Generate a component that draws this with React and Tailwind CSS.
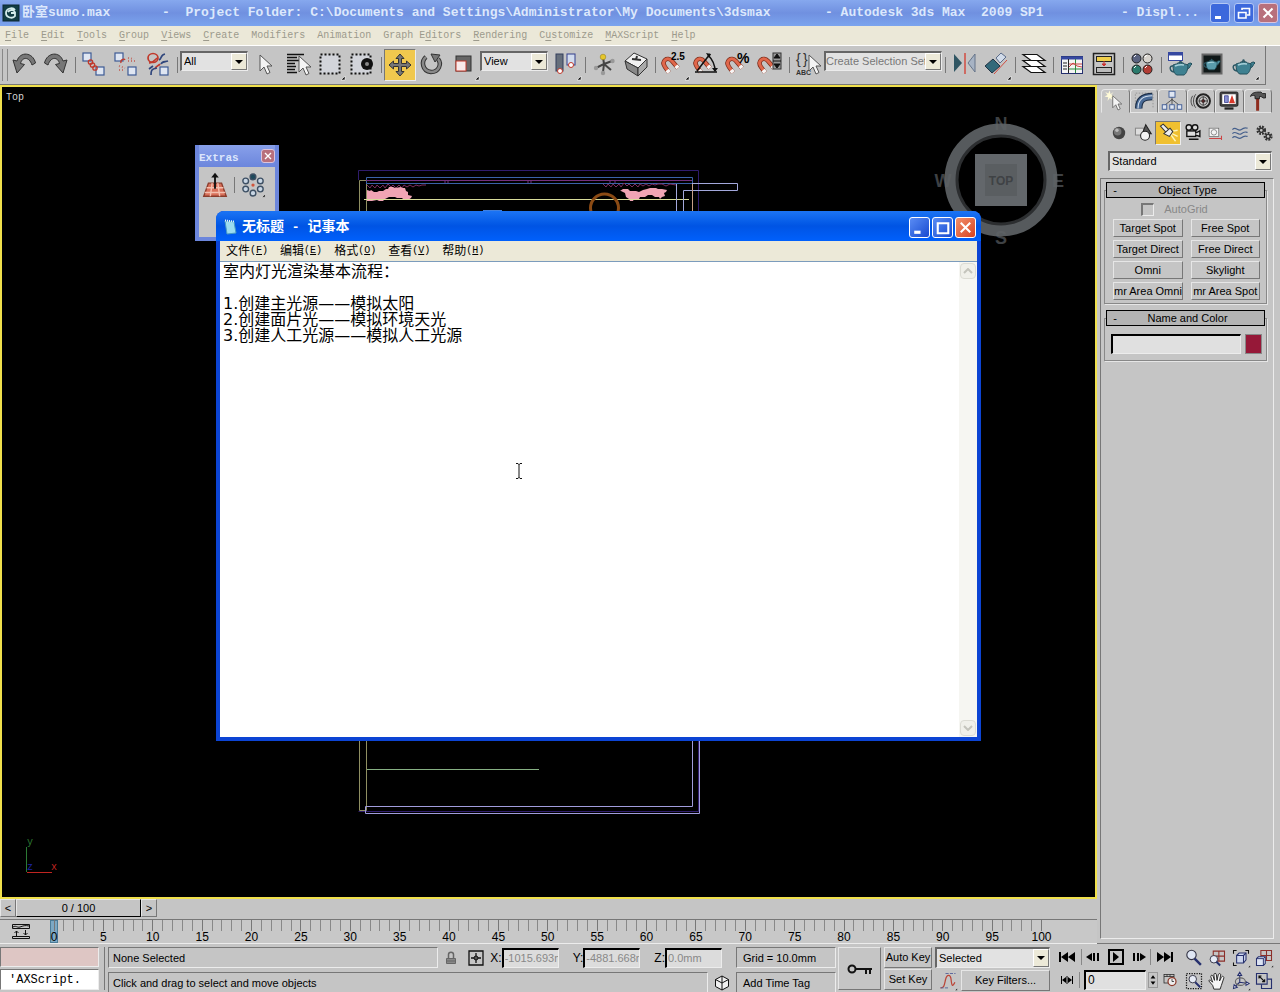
import React, { useState } from "react";

const MENUS = [
  ["", "F", "ile"],
  ["", "E", "dit"],
  ["", "T", "ools"],
  ["", "G", "roup"],
  ["", "V", "iews"],
  ["", "C", "reate"],
  ["Modifiers", "", ""],
  ["Animation", "", ""],
  ["Graph E", "d", "itors"],
  ["", "R", "endering"],
  ["C", "u", "stomize"],
  ["", "M", "AXScript"],
  ["", "H", "elp"],
];

const NOTE_MENUS = [
  ["文件", "F"],
  ["编辑", "E"],
  ["格式", "O"],
  ["查看", "V"],
  ["帮助", "H"],
];

const LIGHT_TYPES = [
  "Target Spot",
  "Free Spot",
  "Target Direct",
  "Free Direct",
  "Omni",
  "Skylight",
  "mr Area Omni",
  "mr Area Spot",
];

const NOTE_TEXT = `室内灯光渲染基本流程：

1.创建主光源——模拟太阳
2.创建面片光——模拟环境天光
3.创建人工光源——模拟人工光源`;

const FRAMES = Array.from({ length: 101 }, (_, i) => i);

const RAISED =
  "border border-t-[#e6e6e6] border-l-[#e6e6e6] border-r-[#777] border-b-[#777]";
const SUNKEN =
  "border border-t-[#777] border-l-[#777] border-r-[#ececec] border-b-[#ececec]";

/* ---------- shared icon parts ---------- */

const Flyout = () => <path d="M31 27v4h-4z" fill="#111" stroke="#fff" strokeWidth=".6" />;

const Pointer = ({ x = 0, y = 0 }) => (
  <path
    transform={`translate(${x} ${y})`}
    d="M0 0v16l4-4 3 7 3-1.500-3-6.500h5z"
    fill="#f4f4f4"
    stroke="#555"
  />
);

const Box = ({ x, y, s = 8 }) => (
  <rect x={x} y={y} width={s} height={s} fill="#dfe6f2" stroke="#3d5a94" strokeWidth="1.200" />
);

const Magnet = () => (
  <g fill="none">
    <path d="M20 19L14 12C9 7 3 12 7 18l4 5.500" stroke="#7a2d1c" strokeWidth="4.500" />
    <path d="M20 19L14 12C9 7 3 12 7 18l4 5.500" stroke="#e0674b" strokeWidth="3" />
    <path d="M18 16.700l2 2.300M9.200 21l1.800 2.500" stroke="#f6f6f6" strokeWidth="4" />
  </g>
);

const Teapot = ({ fill = "#3f8191" }) => (
  <g>
    <path d="M8 16c-4-1-4 6 2 6" fill="none" stroke="#2d5865" strokeWidth="1.500" />
    <path d="M22 19c3 0 3-4 5-5l-1-1c-3 0-4 2-5 3z" fill={fill} stroke="#24505c" />
    <path d="M8 15c5-2 10-2 15 0 0 5-2 9-4 10h-7c-3-1-4-5-4-10z" fill={fill} stroke="#24505c" />
    <path d="M10 16c4-1.500 6-1.500 9-1" fill="none" stroke="#a9d2da" strokeWidth="1.500" />
    <path d="M12 13.500c2-1.500 5-1.500 7 0" stroke="#24505c" fill={fill} />
    <circle cx="15.500" cy="11.500" r="1.200" fill="#2d5865" />
  </g>
);

const Undo = () => (
  <path
    d="M27.500 14C25 3 12 2 9 12L5 11 9 24l7.500-8.500-4-1C14 8 21 7 24 16z"
    fill="#777"
    stroke="#333"
  />
);

const ICONS = {
  undo: <Undo />,
  redo: (
    <g transform="matrix(-1 0 0 1 32 0)">
      <Undo />
    </g>
  ),
  link: (
    <g fill="none" stroke="#c0392b" strokeWidth="1.300">
      <Box x={5} y={4} />
      <Box x={18} y={18} />
      <circle cx="12.500" cy="13" r="2.200" />
      <circle cx="14.500" cy="16" r="2.200" />
      <circle cx="17" cy="19" r="2.200" />
    </g>
  ),
  unlink: (
    <g fill="none" stroke="#c0392b" strokeWidth="1.300">
      <Box x={5} y={4} />
      <Box x={18} y={18} />
      <path d="M11 14c-1-3 3-5 4-3" />
      <path d="M18 9l6 1M18 12h7M9 17l6 2M9 21h6" strokeDasharray="1 2" strokeWidth="2" opacity=".6" />
    </g>
  ),
  bind: (
    <g fill="none" strokeWidth="1.700">
      <ellipse cx="11" cy="9" rx="5" ry="4.500" stroke="#c0392b" />
      <path d="M7 14c4 0 5-2 8-5M18 15c-1 2-4 1-5 5" stroke="#c0392b" />
      <path d="M17 11c3-1 1-5 6-6M9 26c0-4 0-6 6-7M19 15c1-3 4-2 7-3M7 20l4-3" stroke="#30467c" />
      <Box x={18} y={18} />
    </g>
  ),
  select: <Pointer x={10} y={6} />,
  byName: (
    <g>
      <path
        d="M5 5.500h17M5 8.500h10M5 11.500h12M5 14.500h8M5 17.500h9M5 20.500h8M5 23.500h10"
        stroke="#111"
        strokeWidth="1.500"
      />
      <Pointer x={17} y={7} />
    </g>
  ),
  region: (
    <g>
      <rect x="6.500" y="5.500" width="19" height="19" fill="#d2d4da" stroke="#111" strokeWidth="2" strokeDasharray="2 2" />
      <Flyout />
    </g>
  ),
  crossing: (
    <g>
      <rect x="5.500" y="5.500" width="19" height="19" fill="#d2d4da" stroke="#111" strokeWidth="2" strokeDasharray="2 2" />
      <circle cx="21" cy="15" r="6" fill="#111" />
      <circle cx="21" cy="15" r="2" fill="#888" />
    </g>
  ),
  move: (
    <path
      d="M16 5l4 4.500h-2.500v5h5V12l4.500 4-4.500 4v-2.500h-5v5H20L16 27l-4-4.500h2.500v-5h-5V20L5 16l4.500-4v2.500h5v-5H12z"
      fill="#777"
      stroke="#333"
    />
  ),
  rotate: (
    <g fill="none">
      <path d="M10 8c-5 4-4 14 5 15 8 0 11-8 7-13" stroke="#333" strokeWidth="4.500" />
      <path d="M10 8c-5 4-4 14 5 15 8 0 11-8 7-13" stroke="#888" strokeWidth="2.500" />
      <path d="M15 5l9 1-5 7z" fill="#777" stroke="#333" />
    </g>
  ),
  scale: (
    <g>
      <rect x="8" y="7" width="15" height="15" fill="#666" stroke="#333" />
      <rect x="8" y="12" width="10" height="10" fill="#f8eaea" stroke="#c0392b" />
      <Flyout />
    </g>
  ),
  pivot: (
    <g>
      <rect x="6" y="5" width="7" height="17" fill="#666f7c" stroke="#333f5c" />
      <rect x="17" y="5" width="8" height="11" fill="#d2dcee" stroke="#333f8c" />
      <circle cx="10" cy="22" r="2.500" fill="#fff" stroke="#c0392b" />
      <circle cx="21" cy="16" r="2.500" fill="#fff" stroke="#c0392b" />
      <Flyout />
    </g>
  ),
  manipulate: (
    <g>
      <path d="M15 8l1 7-8 4M16 15l8-3M16 15l-1 8M16 15l7 6" fill="none" stroke="#444" strokeWidth="2" />
      <circle cx="15" cy="8" r="2.800" fill="#e6c62a" stroke="#8a7618" strokeWidth=".5" />
      <circle cx="24.500" cy="12" r="2.200" fill="#999" />
      <circle cx="8" cy="19" r="2.200" fill="#999" />
      <circle cx="15" cy="24" r="2.200" fill="#999" />
    </g>
  ),
  keyboard: (
    <g stroke="#333">
      <path d="M5 12l9-8 13 6-9 9z" fill="#f0f0f0" />
      <path d="M5 12l13 7v8L7 20z" fill="#888" />
      <path d="M27 10v8l-9 9v-8z" fill="#aaa" />
      <path d="M12 10l9 1M17 7l-1 4" strokeWidth="2" />
    </g>
  ),
  snap: (
    <g>
      <Magnet />
      <text x="13" y="11" fontSize="10" fontWeight="700" fontFamily="Liberation Sans">2.5</text>
      <Flyout />
    </g>
  ),
  angleSnap: (
    <g>
      <Magnet />
      <path d="M5 23h22M7 22L20 5M18 6c5 5 7 10 7 16" fill="none" stroke="#111" strokeWidth="1.500" />
      <path d="M16 4l5 1-2 4zM22 19l6 0-3 4z" fill="#111" />
    </g>
  ),
  percentSnap: (
    <g>
      <Magnet />
      <text x="15" y="14" fontSize="14" fontWeight="700" fontFamily="Liberation Sans">%</text>
    </g>
  ),
  spinnerSnap: (
    <g>
      <Magnet />
      <rect x="19" y="4" width="8" height="16" fill="#999" stroke="#333" />
      <path d="M23 5l3 4h-6zM23 19l3-4h-6zM19 12h8" fill="#111" stroke="#111" />
    </g>
  ),
  namedSets: (
    <g fill="#333">
      <text x="4" y="15" fontSize="14" fontFamily="Liberation Sans">{"{"}</text>
      <text x="11" y="15" fontSize="14" fontFamily="Liberation Sans">{"}"}</text>
      <text x="4" y="26" fontSize="7" fontWeight="700" fontFamily="Liberation Sans">ABC</text>
      <Pointer x={17} y={6} />
    </g>
  ),
  mirror: (
    <g>
      <path d="M6 5v18l8-9z" fill="#2f5563" />
      <path d="M27 5v18l-7-9z" fill="#a7b3c4" stroke="#66758a" />
      <path d="M17 4v21" stroke="#d04b40" strokeWidth="1.500" />
    </g>
  ),
  align: (
    <g>
      <path d="M5 17l8-7 7 7-8 7z" fill="#32697a" stroke="#234" />
      <path d="M16 9l5-5 5 4-6 6z" fill="#d2dcea" stroke="#5b6c8a" />
      <path d="M14 25L27 11" stroke="#d04b40" />
      <Flyout />
    </g>
  ),
  layers: (
    <g fill="#fff" stroke="#111" strokeWidth="1.200">
      <path d="M5 17.500h14l8 6H13z" />
      <path d="M5 11.500h14l8 6H13z" />
      <path d="M5 5.500h14l8 6H13z" />
    </g>
  ),
  curve: (
    <g fill="none">
      <rect x="5.500" y="7.500" width="21" height="17" fill="#f4f4f4" stroke="#25306e" />
      <path d="M5 9h22" stroke="#3648a0" strokeWidth="3" />
      <path d="M7 14h4M7 17h4M7 20h4M12.500 10v14" stroke="#222" />
      <path d="M13 20h13M19.500 10v14" stroke="#2a8a3c" />
      <path d="M13 18l4-4 4 3 5 1M13 15h13" stroke="#c44" />
    </g>
  ),
  schematic: (
    <g>
      <rect x="5.500" y="4.500" width="21" height="21" fill="none" stroke="#222" strokeWidth="1.500" />
      <rect x="8.500" y="7.500" width="15" height="5" fill="#f0cf4c" stroke="#222" />
      <rect x="8.500" y="18.500" width="15" height="5" fill="#bbb" stroke="#222" />
      <path d="M16 12v4M14 15h4l-2 2z" fill="#c33" stroke="#c33" />
    </g>
  ),
  material: (
    <g stroke="#222">
      <circle cx="10.500" cy="9.500" r="4.500" fill="#5a6380" />
      <circle cx="21.500" cy="9.500" r="4.500" fill="#d8d4ce" />
      <circle cx="10.500" cy="20.500" r="4.500" fill="#2b7a6c" />
      <circle cx="21.500" cy="20.500" r="4.500" fill="#b13c34" />
      <path d="M8 8l2-2M19 8l2-2M8 19l2-2M19 19l2-2" stroke="#fff" />
    </g>
  ),
  renderSetup: (
    <g>
      <g transform="translate(1 1)">
        <Teapot />
      </g>
      <rect x="4.500" y="3.500" width="14" height="8" fill="#fff" stroke="#3648a0" />
      <path d="M4 5h15" stroke="#3648a0" strokeWidth="3" />
    </g>
  ),
  renderFrame: (
    <g>
      <rect x="6.500" y="5.500" width="19" height="19" fill="#101818" stroke="#666" strokeWidth="2" />
      <g transform="translate(4 2) scale(.75)">
        <Teapot fill="#5a9cac" />
      </g>
    </g>
  ),
  render: (
    <g>
      <Teapot />
      <Flyout />
    </g>
  ),
  tabCreate: (
    <g>
      <path d="M9 2l1 5 4-3-3 4 5 2-5 1 2 4-4-3-3 4 1-5-5-1 4-2-3-4 4 2z" fill="#fffbd8" />
      <Pointer x={13} y={9} />
    </g>
  ),
  tabModify: (
    <g fill="none">
      <path d="M4.500 25V5.500H28V25" stroke="#888" strokeDasharray="2 2" />
      <path d="M9 26C9 14 15 10 27 10" stroke="#1d2f48" strokeWidth="10" />
      <path d="M9 26C9 14 15 10 27 10" stroke="#4a6b97" strokeWidth="7" />
      <path d="M8 26C8 13 15 9 27 9" stroke="#d4e0ee" strokeWidth="1.500" />
    </g>
  ),
  tabHierarchy: (
    <g>
      <path d="M16 10v5M16 14L7 21M16 14l9 7M16 14v7" stroke="#333" />
      <Box x={12} y={3} />
      <Box x={3} y={21} s={6} />
      <Box x={13} y={21} s={6} />
      <Box x={23} y={21} s={6} />
    </g>
  ),
  tabMotion: (
    <g fill="none" stroke="#222">
      <circle cx="19" cy="16" r="9" strokeWidth="2.500" />
      <circle cx="19" cy="16" r="5.500" />
      <circle cx="19" cy="16" r="2" fill="#c33" />
      <path d="M19 10v12M13 16h12M9 7c-4 5-4 13 0 18M5 9c-3 4-3 10 0 14" />
    </g>
  ),
  tabDisplay: (
    <g>
      <rect x="4" y="4" width="24" height="19" rx="2" fill="#444" stroke="#111" />
      <rect x="7" y="7" width="18" height="13" fill="#fff" />
      <path d="M10 9h5v9h-5z" fill="#8a90d4" stroke="#333a88" />
      <path d="M20 8l4 11h-8z" fill="#d83a2c" />
      <path d="M10 26h12" stroke="#222" strokeWidth="3" />
    </g>
  ),
  tabUtility: (
    <g>
      <path d="M15.500 11v18" stroke="#8e2c1e" strokeWidth="4" />
      <path d="M6 10c1-5 6-6 12-6h2l2 2h4v6h-3l-3-2h-2v3h-6V9c-3-1-5 0-6 1z" fill="#555" stroke="#111" />
    </g>
  ),
  geometry: (
    <g>
      <circle cx="16" cy="16" r="9" fill="#444" />
      <circle cx="14" cy="14" r="5.500" fill="#777" />
      <circle cx="13" cy="12" r="2.500" fill="#bbb" />
    </g>
  ),
  shapes: (
    <g fill="#ddd" stroke="#222" strokeWidth="1.500">
      <rect x="5" y="9" width="12" height="10" stroke="#888" />
      <path d="M20 4l8 13H15z" fill="#555" />
      <circle cx="19" cy="20" r="6.500" fill="#f4f4f4" />
    </g>
  ),
  lights: (
    <g>
      <path d="M19 14l11-2M19 17l8 11M20 16l10 5" stroke="#fff5b8" strokeWidth="2" />
      <path d="M5 6l4-3 8 8-4 4z" fill="#eee" stroke="#333" strokeWidth="1.500" />
      <path d="M10 17l9-8 4 5-5 7z" fill="#eee" stroke="#333" strokeWidth="1.500" />
    </g>
  ),
  cameras: (
    <g stroke="#111" fill="#ddd" strokeWidth="2">
      <rect x="7" y="13" width="13" height="8" />
      <circle cx="10" cy="8" r="4" />
      <circle cx="19" cy="8" r="4" />
      <path d="M20 16l6-3v8l-6-2M10 25h14" />
    </g>
  ),
  helpers: (
    <g>
      <rect x="6" y="9" width="14" height="12" fill="#f4f4f4" stroke="#666" />
      <circle cx="13" cy="15" r="4" fill="none" stroke="#666" />
      <path d="M6 24h18M24 20v6" stroke="#c44" strokeWidth="1.500" />
    </g>
  ),
  warps: (
    <g fill="none" stroke="#46608c" strokeWidth="1.700">
      <path d="M5 11c5-6 8 4 13 0s6-2 9-2M5 17c5-6 8 4 13 0s6-2 9-2M5 23c5-6 8 4 13 0s6-2 9-2" />
    </g>
  ),
  systems: (
    <g fill="none" stroke="#333">
      <circle cx="12" cy="12" r="5" strokeWidth="4" strokeDasharray="2.500 1.500" />
      <circle cx="22" cy="21" r="4.500" strokeWidth="4" strokeDasharray="2.500 1.500" />
      <circle cx="12" cy="12" r="3" strokeWidth="2" />
      <circle cx="22" cy="21" r="3" strokeWidth="2" />
    </g>
  ),
  zoom: (
    <g>
      <circle cx="12" cy="11" r="7.500" fill="#dfe6f4" stroke="#334" strokeWidth="1.800" />
      <path d="M17 17l10 10" stroke="#26306e" strokeWidth="4" />
    </g>
  ),
  zoomAll: (
    <g fill="none">
      <path d="M10 5h18v16H10zM19 5v16M10 13h18" stroke="#8c2f2a" strokeWidth="1.700" />
      <circle cx="11" cy="18" r="6" fill="#e6ebf6" stroke="#334" strokeWidth="1.500" />
      <path d="M15 22l6 6" stroke="#26306e" strokeWidth="3" />
    </g>
  ),
  extents: (
    <g stroke="#26306e" strokeWidth="1.700">
      <path d="M9 12l4-4h11v11l-4 5H9z" fill="#cdd6ec" />
      <path d="M9 12h11v12M20 12l4-4" fill="none" />
      <path d="M4 9V4h5M23 4h5v5M4 23v5h5" fill="none" stroke="#111" />
      <Flyout />
    </g>
  ),
  extentsAll: (
    <g fill="none">
      <path d="M11 4h17v16H11zM20 4v16M11 12h17" stroke="#8c2f2a" strokeWidth="1.700" />
      <path d="M4 17l3-3h11v11l-3 3H4z" fill="#dbe2f2" stroke="#26306e" strokeWidth="1.700" />
      <path d="M4 17h11v11M15 17l3-3" stroke="#26306e" strokeWidth="1.500" />
      <Flyout />
    </g>
  ),
  zoomRegion: (
    <g fill="none">
      <rect x="4" y="4" width="24" height="24" stroke="#111" strokeWidth="2" strokeDasharray="2 2" />
      <circle cx="14" cy="13" r="6" fill="#e6ebf6" stroke="#334" strokeWidth="1.500" />
      <path d="M18 18l8 8" stroke="#26306e" strokeWidth="3" />
    </g>
  ),
  pan: (
    <path
      d="M11 29l-2-6-6-7c0-3 4-1 6 2L6 9c0-3 3-3 4 0l2 6-1-9c0-3 4-3 4 0l1 9 2-9c1-3 4-2 4 0l-2 10 3-6c2-3 4-1 4 1l-4 12-2 6z"
      fill="#f6f6f6"
      stroke="#222"
      strokeWidth="1.500"
    />
  ),
  orbit: (
    <g fill="none" stroke="#26306e" strokeWidth="1.700">
      <path d="M14 4v14l-9 8M14 18l13 2" />
      <path d="M11 7l3-5 3 5zM5 22l-1 6 6-2zM24 17l5 3-5 3z" fill="#fff" />
      <ellipse cx="15" cy="17" rx="8" ry="6" stroke="#666" />
      <Flyout />
    </g>
  ),
  maximize: (
    <g fill="none" stroke="#26306e" strokeWidth="1.800">
      <path d="M4 4h17v17H4z" />
      <path d="M21 13h7v15H12v-7" />
      <path d="M8 8l9 9M8 12V8h4M17 13v4h-4" stroke="#111" />
    </g>
  ),
  timeConfig: (
    <g fill="none" stroke="#222" strokeWidth="1.500">
      <rect x="4" y="5" width="20" height="17" />
      <path d="M4 9h20M10 5v4M16 5v4" />
      <circle cx="20" cy="19" r="8" fill="#eee" stroke="#8c3a2a" strokeWidth="2.500" />
      <path d="M20 14v5h4" />
    </g>
  ),
  tangent: (
    <g fill="none">
      <path d="M4 27c6 0 6-4 8-13S20 4 21 14s2 12 6 4" stroke="#bb4638" strokeWidth="2" />
      <path d="M12 4h16M4 27h14" stroke="#56639a" strokeWidth="1.500" strokeDasharray="5 2" />
      <Flyout />
    </g>
  ),
  grid: (
    <g>
      <path d="M9 14h14l5 14H4z" fill="#d8705a" stroke="#8a3c2c" strokeWidth="1.500" />
      <path d="M7 19h18M5 24h22M13 14l-2 14M19 14l2 14" stroke="#f3c0b0" strokeWidth="1.500" />
      <path d="M16 20V6" stroke="#111" strokeWidth="2" />
      <path d="M12 8l4-5 4 5z" fill="#111" />
    </g>
  ),
  array: (
    <g fill="#c9d6e4" stroke="#3e5064" strokeWidth="1.700">
      <circle cx="16" cy="6" r="3.500" fill="#1e4a5c" />
      <circle cx="25" cy="11" r="3.500" />
      <circle cx="25" cy="21" r="3.500" />
      <circle cx="16" cy="26" r="3.500" />
      <circle cx="7" cy="21" r="3.500" />
      <circle cx="7" cy="11" r="3.500" />
      <circle cx="16" cy="16" r="2" fill="#d0553c" stroke="none" />
      <Flyout />
    </g>
  ),
};

const Icon = ({ name, className = "size-8" }) => (
  <svg viewBox="0 0 32 32" className={`${className} shrink-0`} aria-hidden="true">
    {ICONS[name]}
  </svg>
);

const Tool = ({ name, active }) => (
  <button
    aria-label={name}
    className={`flex size-8 shrink-0 items-center justify-center ${
      active ? `bg-[#f0c84e] ${SUNKEN}` : ""
    }`}
  >
    <Icon name={name} />
  </button>
);

const Sep = () => (
  <div className="flex w-1.5 shrink-0 justify-center">
    <div className="h-4 w-px bg-[#777]" />
  </div>
);

const Combo = ({ label, value, className, muted }) => (
  <div className={`relative shrink-0 border border-t-2 border-l-2 border-[#ececec] border-t-[#666] border-l-[#666] bg-[#e2e2e2] ${className}`}>
    <select
      aria-label={label}
      className={`block h-full w-full appearance-none bg-transparent text-[11px] outline-none ${
        muted ? "pr-3.5 pl-0 text-[#777]" : "pr-4 pl-0.5 text-black"
      }`}
    >
      <option>{value}</option>
    </select>
    <span className="pointer-events-none absolute inset-y-0 right-0 flex w-4 items-center justify-center border border-t-white border-r-[#777] border-b-[#777] border-l-white bg-[#ece9d8]">
      <svg viewBox="0 0 8 4" className="h-1 w-2">
        <path d="M0 0h8L4 4z" />
      </svg>
    </span>
  </div>
);

const WindowButton = ({ kind, faded, className }) => {
  const tone =
    kind === "close"
      ? faded
        ? "bg-[#b8707c] border-[#dcc4dc]"
        : "bg-linear-to-br from-[#f0906c] to-[#d8401c] border-white"
      : faded
        ? "bg-[#3c68dc] border-[#b4c8f4]"
        : "bg-linear-to-br from-[#5a8cf4] to-[#1848d0] border-white";
  return (
    <button aria-label={kind} className={`rounded-[3px] border ${tone} ${className}`}>
      <svg viewBox="0 0 18 18" className="size-full" fill="none" stroke="#fff" strokeWidth="2">
        {kind === "minimize" && <path d="M4 13.500h6" strokeWidth="3" />}
        {kind === "maximize" && <path d="M4 5h11M4.500 4v10.500h10V4" />}
        {kind === "restore" && <path d="M7 6V4.500h7.500V11H12M3.500 8.500H11V14H3.500z" strokeWidth="1.600" />}
        {kind === "close" && <path d="M4.500 4.500l9 9M13.500 4.500l-9 9" />}
      </svg>
    </button>
  );
};

/* ---------- top bars ---------- */

function TitleBar() {
  return (
    <header className="flex h-[26px] items-center overflow-hidden bg-linear-to-b from-[#86a8ee] via-[#7090e0] to-[#7ba4ee] pr-0.5 pl-0.5">
      <svg viewBox="0 0 18 18" className="size-[18px] shrink-0">
        <rect width="16" height="16" x="1" y="1" fill="#123c44" stroke="#0a2630" />
        <path d="M13 6C11 3 4 4 4 9s7 6 9 3V9H9M6 8c1-2 5-3 7 0" fill="none" stroke="#d5ecec" strokeWidth="1.800" />
      </svg>
      <h1 className="flex min-w-0 flex-1 overflow-hidden pl-0.5 font-['Liberation_Mono','Noto_Sans_CJK_SC',monospace] text-[13px] font-bold whitespace-pre text-[#dce8fc]">
        <span className="w-[140px] shrink-0">卧室sumo.max</span>
        <span className="w-[663px] shrink-0">-  Project Folder: C:\Documents and Settings\Administrator\My Documents\3dsmax</span>
        <span className="w-[296px] shrink-0">- Autodesk 3ds Max  2009 SP1</span>
        <span>- Displ...</span>
      </h1>
      <div className="flex gap-1">
        <WindowButton kind="minimize" faded className="size-5" />
        <WindowButton kind="restore" faded className="size-5" />
        <WindowButton kind="close" faded className="size-5" />
      </div>
    </header>
  );
}

function MenuBar() {
  return (
    <nav className="flex h-5 items-center gap-3 border-b border-white bg-[#ebe8d8] pl-[5px] font-['Liberation_Mono',monospace] text-[10px] text-[#9c9a8c]">
      {MENUS.map(([before, key, after]) => (
        <button key={before + key + after} className="whitespace-nowrap">
          {before}
          <span className="underline underline-offset-2">{key}</span>
          {after}
        </button>
      ))}
    </nav>
  );
}

function Toolbar() {
  return (
    <div className="flex h-[39px] bg-[#c5c5c5]">
      <div className="flex w-[1266px] items-center overflow-hidden border-r border-b border-[#777] pl-0.5">
        <div className="h-8 w-1.5 shrink-0 border-x border-[#888]" />
        <Tool name="undo" />
        <Tool name="redo" />
        <Sep />
        <Tool name="link" />
        <Tool name="unlink" />
        <Tool name="bind" />
        <Sep />
        <Combo label="Selection filter" value="All" className="mb-2 h-5 w-[68px]" />
        <div className="w-0.5 shrink-0" />
        <Tool name="select" />
        <Tool name="byName" />
        <Tool name="region" />
        <Tool name="crossing" />
        <Sep />
        <Tool name="move" active />
        <Tool name="rotate" />
        <Tool name="scale" />
        <Combo label="Reference coordinate system" value="View" className="mb-2 h-5 w-[68px]" />
        <div className="w-0.5 shrink-0" />
        <Tool name="pivot" />
        <Sep />
        <Tool name="manipulate" />
        <Tool name="keyboard" />
        <Sep />
        <Tool name="snap" />
        <Tool name="angleSnap" />
        <Tool name="percentSnap" />
        <Tool name="spinnerSnap" />
        <Sep />
        <Tool name="namedSets" />
        <Combo label="Named selection sets" value="Create Selection Set" muted className="mb-2 h-5 w-[118px]" />
        <Sep />
        <Tool name="mirror" />
        <Tool name="align" />
        <Sep />
        <Tool name="layers" />
        <Sep />
        <Tool name="curve" />
        <Tool name="schematic" />
        <Sep />
        <Tool name="material" />
        <Sep />
        <Tool name="renderSetup" />
        <Tool name="renderFrame" />
        <Tool name="render" />
      </div>
    </div>
  );
}

/* ---------- viewport ---------- */

const ZIGZAG = "l3 3 2-3 3 3 2-3 3 3 3-3 2 3 3-4 3 3 2-2 3 3 3-3 3 3 2-3 3 2 3-2 3 2 3-2 3 1 3-1 4 0";

function Scene() {
  return (
    <svg viewBox="2 87 800 740" className="absolute top-0 left-0 h-[740px] w-[800px]" fill="none">
      <path d="M358.500 180V170.500h340v641h-340" stroke="#2f1c6c" />
      <path d="M366.500 212V177.500h326V184M366 183.500h326" stroke="#3a62a8" />
      <path d="M366 180.500h326M445 181v2M448 181v2M528 181v2M531 181v2M610 181v2M615 181v2" stroke="#74307e" />
      <path d="M366 180.500h-6.500v630h7V184" stroke="#8f8f62" />
      <path d={`M367 185${ZIGZAG}`} stroke="#7c2c5c" />
      <path d={`M603 184${ZIGZAG}l4 2 4-2 6 1`} stroke="#7c2c5c" />
      <path
        d="M367 190l3 1 1-1 3 2 3 0 2-1 4 0 3-2 2 0 1-2 4 0 2 1 6-1 1 1h3l1 3 2 1 0 3 4 1-1 2-3 2h-4l-2-2-5 0-2-1-6 0-4 2-2 2-4 0-2-1-5 1h-5z"
        fill="#f0a4b4"
      />
      <path
        d="M620 191l3-2 5 0 2 2 6 0 3 1 4-2 4-1 3-1h6l2 1h4l5 1-1 2-2 1 1 3-3 1-2 2-1-2-4 0-3-2-4 0-3 2-5 0-1 2-5 0-1 2h-3l-1-2-3-2-1-4-4-2z"
        fill="#f0a4b4"
      />
      <path d="M364 199.500h325" stroke="#d8dc9a" />
      <path d="M676.500 184v28M692 183.500h45.500v7h-54V212" stroke="#a3a8dc" />
      <path d="M692.500 184v28" stroke="#c8a088" />
      <circle cx="604.500" cy="208" r="14" stroke="#8a4a14" strokeWidth="3" />
      <path d="M483 210.500h19" stroke="#4080e0" />
      <path d="M367 769.500h172" stroke="#86b083" />
      <path d="M692.500 740v66.500h-327v7h334V740" stroke="#a09cdc" />
    </svg>
  );
}

function Compass() {
  return (
    <svg viewBox="930 110 140 140" className="absolute top-[23px] right-[25px] size-[140px]" fontFamily="Liberation Sans">
      <g fill="#3e4144" fontSize="18" fontWeight="700" textAnchor="middle">
        <text x="1001" y="130">N</text>
        <text x="1001" y="244">S</text>
        <text x="943" y="187">W</text>
        <text x="1058" y="187">E</text>
      </g>
      <circle cx="1001" cy="180" r="50" fill="none" stroke="#5f6467" strokeWidth="13" opacity=".9" />
      <circle cx="1001" cy="180" r="44" fill="none" stroke="#2c2e30" strokeWidth="3" />
      <rect x="975" y="154" width="52" height="52" fill="#63676b" />
      <rect x="985" y="164" width="32" height="32" fill="#5a5e61" />
      <text x="1001" y="185" fill="#3f4245" fontSize="12" fontWeight="700" textAnchor="middle">
        TOP
      </text>
    </svg>
  );
}

function ExtrasWindow() {
  return (
    <section className="absolute top-[58px] left-[193px] flex h-24 w-[84px] flex-col border-4 border-t-0 border-[#6c86dc] bg-[#c5c5c5]">
      <div className="flex h-[22px] items-center justify-between bg-linear-to-b from-[#88a0ea] to-[#6c86dc]">
        <h2 className="pt-1 font-['Liberation_Mono',monospace] text-[11px] font-bold text-[#dce6fc]">Extras</h2>
        <WindowButton kind="close" faded className="size-3.5" />
      </div>
      <div className="flex items-center pt-0.5">
        <button aria-label="grid" className="flex size-8 items-center justify-center">
          <Icon name="grid" className="size-[30px]" />
        </button>
        <Sep />
        <button aria-label="array" className="flex size-8 items-center justify-center">
          <Icon name="array" className="size-[26px]" />
        </button>
      </div>
    </section>
  );
}

function ScrollArrow({ up }) {
  return (
    <button aria-label={up ? "Scroll up" : "Scroll down"} className="m-px flex h-4 items-center justify-center rounded-sm border border-[#dcdcd4] bg-[#f0f0ea]">
      <svg viewBox="0 0 10 6" className="h-1.5 w-2.5" fill="none" stroke="#c4c4bc" strokeWidth="2">
        <path d={up ? "M1 5l4-4 4 4" : "M1 1l4 4 4-4"} />
      </svg>
    </button>
  );
}

function Notepad() {
  const [text, setText] = useState(NOTE_TEXT);

  return (
    <section className="absolute top-[124px] left-[214px] flex h-[530px] w-[765px] flex-col rounded-t-lg border-4 border-t-0 border-[#0c44d4] bg-[#0c44d4] font-['Liberation_Sans','Noto_Sans_CJK_SC',sans-serif]">
      <div className="-mx-1 flex h-[30px] shrink-0 items-center rounded-t-lg bg-linear-to-b from-[#1c74f4] via-[#0054e4] to-[#0060fc] pt-0.5 pr-[5px] pl-1.5">
        <svg viewBox="0 0 16 16" className="size-4">
          <path d="M3 2l9 1 2 11-9 1z" fill="#9cdcf0" stroke="#4a9cc4" />
          <path d="M3 1.500l9 1" stroke="#e8f8ff" strokeWidth="2" strokeDasharray="1 1" />
        </svg>
        <h2 className="flex-1 pl-1 text-sm font-bold whitespace-pre text-white">
          无标题<span className="font-['Liberation_Mono',monospace] text-[13px]"> - </span>记事本
        </h2>
        <div className="flex gap-0.5">
          <WindowButton kind="minimize" className="size-[21px]" />
          <WindowButton kind="maximize" className="size-[21px]" />
          <WindowButton kind="close" className="size-[21px]" />
        </div>
      </div>
      <nav className="flex h-5 shrink-0 items-center gap-3 bg-[#ece9d8] pl-1.5">
        {NOTE_MENUS.map(([name, key]) => (
          <button key={key} className="flex items-center text-xs leading-5">
            {name}
            <span className="font-['Liberation_Mono',monospace] text-[10px]">
              (<span className="underline">{key}</span>)
            </span>
          </button>
        ))}
      </nav>
      <div className="flex min-h-0 flex-1 border-t border-[#7c9cbc] bg-white">
        <textarea
          aria-label="记事本"
          value={text}
          onChange={(e) => setText(e.target.value)}
          className="block flex-1 resize-none overflow-hidden bg-white pt-0.5 pl-[3px] font-['DejaVu_Sans','Noto_Sans_CJK_SC',sans-serif] text-base leading-4 text-black outline-none"
        />
        <div className="flex w-[18px] flex-col justify-between bg-[#f6f6f2]">
          <ScrollArrow up />
          <ScrollArrow />
        </div>
      </div>
    </section>
  );
}

function Viewport() {
  return (
    <main className="relative min-h-[760px] flex-1 overflow-hidden border-2 border-[#f0e04c] bg-black">
      <p className="pt-[3px] pl-1 font-['Liberation_Mono',monospace] text-[10px] text-[#d4d4d4]">Top</p>
      <Scene />
      <Compass />
      <svg viewBox="20 835 40 42" className="absolute bottom-5 left-[18px] h-[42px] w-10" fontFamily="Liberation Mono" fontSize="10">
        <path d="M26.500 847v25" stroke="#2c7a34" />
        <path d="M27 872.500h25" stroke="#c02420" />
        <text x="27" y="845" fill="#2c7a34">y</text>
        <text x="27" y="870" fill="#1c24a4">z</text>
        <text x="51" y="870" fill="#c02420">x</text>
      </svg>
      <ExtrasWindow />
      <Notepad />
      <svg viewBox="0 0 8 16" className="absolute top-[376px] left-[513px] h-4 w-2" fill="none" stroke="#111">
        <path d="M1 .500h2l1 1 1-1h2M4 1v14M1 15.500h2l1-1 1 1h2" />
      </svg>
    </main>
  );
}

/* ---------- time slider and track bar ---------- */

function TimeSlider() {
  return (
    <div className="flex h-5 text-[11px] leading-4">
      <button aria-label="Previous frame" className={`w-4 ${RAISED} mb-0.5`}>&lt;</button>
      <button className="mb-0.5 w-[125px] border border-t-[#e6e6e6] border-r-black border-b-black border-l-[#e6e6e6]">
        0 / 100
      </button>
      <button aria-label="Next frame" className={`w-4 ${RAISED} mb-0.5`}>&gt;</button>
    </div>
  );
}

function TrackBar() {
  return (
    <div className="flex h-[25px] border-t border-b border-t-[#777] border-b-[#ececec] bg-[#c8c8c8] pr-[54px]">
      <button aria-label="Open mini curve editor" className="w-[54px] shrink-0 pl-3">
        <svg viewBox="0 0 18 16" className="h-4 w-[18px]" fill="none" stroke="#111">
          <path d="M.500.500h17v4H.500zM.500 12.500h17v2H.500zM1 3c3-2 4 1 7 0s5-2 9-1" />
          <path d="M4.500 12V7M2.500 9l2-2 2 2M13.500 6v5M11.500 9l2 2 2-2" />
        </svg>
      </button>
      <div className="relative flex flex-1 justify-between text-[12px] leading-3">
        <div className="absolute inset-y-0 -left-1 w-2 border border-[#4c7c98] bg-[#7ca8c4]" />
        {FRAMES.map((f) =>
          f % 5 === 0 ? (
            <div key={f} className="relative flex w-0 flex-col items-center">
              <div className="h-3 w-px bg-[#777]" />
              <span>{f}</span>
            </div>
          ) : (
            <div key={f} className="flex w-0 flex-col items-center">
              <div className="h-[11px] w-px bg-[#888]" />
            </div>
          ),
        )}
      </div>
    </div>
  );
}

/* ---------- command panel ---------- */

const Rollout = ({ title, children }) => (
  <section className="flex flex-col">
    <button className="relative z-10 mx-0.5 flex h-4 items-center border border-black bg-[#b4b4b4] text-[11px] leading-3">
      <span className="w-4">-</span>
      <span className="flex-1 pr-5 pl-2 text-center">{title}</span>
    </button>
    <div className="-mt-2 border border-[#888] pt-2 pr-1.5 pl-2 shadow-[1px_1px_0_#e6e6e6]">{children}</div>
  </section>
);

function CommandPanel() {
  const tabs = ["tabCreate", "tabModify", "tabHierarchy", "tabMotion", "tabDisplay", "tabUtility"];
  const kinds = ["geometry", "shapes", "lights", "cameras", "helpers", "warps", "systems"];

  return (
    <aside className="flex w-[183px] shrink-0 flex-col border-b border-[#777] pt-1 pb-1">
      <div className="flex h-6 pr-2 pl-1">
        {tabs.map((tab, i) => (
          <button
            key={tab}
            aria-label={tab}
            className={`flex flex-1 items-center justify-center rounded-t-sm border border-t-[#e6e6e6] border-r-[#777] border-l-[#e6e6e6] ${
              i === 0 ? "border-b-transparent" : "border-b-[#e6e6e6]"
            }`}
          >
            <Icon name={tab} className="size-6" />
          </button>
        ))}
      </div>
      <div className="flex h-9 items-center pt-1 pr-1 pl-2.5">
        {kinds.map((kind) => (
          <button
            key={kind}
            aria-label={kind}
            className={`flex h-6 min-w-0 flex-1 items-center justify-center ${
              kind === "lights" ? `bg-[#f0c030] ${SUNKEN}` : ""
            }`}
          >
            <Icon name={kind} className="size-[22px]" />
          </button>
        ))}
      </div>
      <Combo label="Light category" value="Standard" className="mt-0.5 mr-2 ml-[11px] h-5" />
      <div className={`mt-[7px] mr-1.5 ml-[3px] flex flex-1 flex-col gap-1.5 pt-[3px] pr-1.5 pb-1 pl-[3px] ${SUNKEN}`}>
        <Rollout title="Object Type">
          <label className="flex h-5 items-center justify-center gap-2.5 pr-6 text-[11px] text-[#888]">
            <input
              type="checkbox"
              disabled
              className={`size-[13px] appearance-none border-t-2 border-l-2 ${SUNKEN}`}
            />
            AutoGrid
          </label>
          <div className="grid grid-cols-2 gap-x-2 gap-y-[3px] pb-[3px]">
            {LIGHT_TYPES.map((type) => (
              <button key={type} className={`h-[18px] overflow-hidden text-[11px] leading-4 whitespace-nowrap ${RAISED}`}>
                {type}
              </button>
            ))}
          </div>
        </Rollout>
        <Rollout title="Name and Color">
          <div className="-mx-0.5 flex gap-1 pt-[7px] pb-1.5">
            <input
              aria-label="Object name"
              className="h-5 min-w-0 flex-1 border border-t-2 border-l-2 border-[#ececec] border-t-black border-l-black bg-[#e0e0e0] px-1 text-[11px]"
            />
            <button aria-label="Object color" className="h-5 w-[17px] border border-[#888] bg-[#961838]" />
          </div>
        </Rollout>
      </div>
    </aside>
  );
}

/* ---------- status bar ---------- */

const Coord = ({ axis, value }) => (
  <label className="flex items-center text-[12px]">
    {axis}:
    <input
      defaultValue={value}
      className="h-5 w-[57px] border border-t-2 border-l-2 border-[#ececec] border-t-black border-l-black bg-[#dcdcdc] pl-px text-[11px] text-[#888]"
    />
  </label>
);

const Play = ({ label, w = "w-[18px]", vb = "0 0 18 12", children }) => (
  <button aria-label={label} className="flex h-5 items-center justify-center">
    <svg viewBox={vb} className={`h-3 ${w}`} fill="#000">
      {children}
    </svg>
  </button>
);

const TO_START = <path d="M0 1h2v10H0zM2 6l7-5v10zM9 6l7-5v10z" />;

function StatusBar() {
  const nav = ["zoom", "zoomAll", "extents", "extentsAll", "zoomRegion", "pan", "orbit", "maximize"];

  return (
    <footer className="flex h-12 shrink-0 overflow-hidden pt-[3px] pb-0.5 text-[11px]">
      <div className="flex w-[99px] shrink-0 flex-col gap-0.5">
        <input aria-label="Macro recorder" className={`h-5 w-full bg-[#dec6c4] ${SUNKEN}`} />
        <input
          aria-label="MAXScript listener"
          defaultValue="'AXScript."
          className={`h-[21px] w-full bg-white pl-2 font-['Liberation_Mono',monospace] text-[12px] ${SUNKEN}`}
        />
      </div>
      <div className="mx-[3px] ml-[5px] w-px shrink-0 bg-[#777]" />

      <div className="flex min-w-0 flex-1 flex-col gap-1">
        <div className="flex h-[21px] items-center">
          <p className={`h-[21px] flex-1 pl-1 leading-5 ${SUNKEN}`}>None Selected</p>
          <div className="flex items-center gap-3 pr-3.5 pl-2">
            <button aria-label="Selection lock">
              <svg viewBox="0 0 10 14" className="h-3.5 w-2.5" fill="none" stroke="#666">
                <path d="M2.500 7V3.500c0-3 5-3 5 0V7" strokeWidth="1.500" />
                <path d="M.500 7.500h9v5h-9zM1 10h8" fill="#888" />
              </svg>
            </button>
            <button aria-label="Absolute mode">
              <svg viewBox="0 0 16 16" className="size-4" fill="none" stroke="#111">
                <path d="M1 1h14v14H1zM8 3v10M3 8h10" strokeWidth="1.300" />
                <circle cx="8" cy="8" r="2" fill="#555" />
              </svg>
            </button>
            <div className="-ml-1.5 flex gap-3.5">
              <Coord axis="X" value="-1015.693mm" />
              <Coord axis="Y" value="-4881.668mm" />
              <Coord axis="Z" value="0.0mm" />
            </div>
          </div>
        </div>
        <div className="flex h-[21px] items-center gap-1.5 pr-1.5">
          <p className={`h-[21px] flex-1 pl-1 leading-5 ${SUNKEN}`}>Click and drag to select and move objects</p>
          <button aria-label="Adaptive degradation">
            <svg viewBox="0 0 16 16" className="size-4" fill="#f0f0f0" stroke="#111">
              <path d="M8 1l6.500 3.500v7L8 15l-6.500-3.500v-7zM8 8v7M8 8L1.500 4.500M8 8l6.500-3.500M8 1v7" />
            </svg>
          </button>
        </div>
      </div>

      <div className="flex w-[100px] shrink-0 flex-col gap-1">
        <p className={`h-[21px] pl-1.5 leading-5 ${SUNKEN}`}>Grid = 10.0mm</p>
        <button className={`h-[21px] pl-1.5 text-left leading-5 ${SUNKEN}`}>Add Time Tag</button>
      </div>

      <button aria-label="Set keys" className={`ml-0.5 flex w-[43px] shrink-0 items-center justify-center ${RAISED}`}>
        <svg viewBox="0 0 26 12" className="h-3 w-[26px]" fill="none" stroke="#111" strokeWidth="2">
          <circle cx="5" cy="6" r="3.500" />
          <path d="M9 6h16M19 6v5M23 6v5" />
        </svg>
      </button>
      <div className="ml-[3px] flex w-12 shrink-0 flex-col gap-px">
        <button className={`h-[22px] whitespace-nowrap ${RAISED}`}>Auto Key</button>
        <button className={`h-[21px] whitespace-nowrap ${RAISED}`}>Set Key</button>
      </div>
      <div className="ml-[3px] flex w-[115px] shrink-0 flex-col gap-0.5">
        <Combo label="Key set" value="Selected" className="h-[21px] w-full" />
        <div className="flex items-center">
          <button aria-label="Default tangents" className="flex w-[26px] justify-center">
            <Icon name="tangent" className="size-5" />
          </button>
          <button className={`h-[21px] flex-1 ${RAISED}`}>Key Filters...</button>
        </div>
      </div>

      <div className="flex w-[130px] shrink-0 flex-col gap-0.5 pl-[9px]">
        <div className="flex h-[21px] items-center gap-1">
          <Play label="Go to start">{TO_START}</Play>
          <div className="h-4 w-px bg-[#888]" />
          <Play label="Previous" w="w-[14px]" vb="0 0 14 12">
            <path d="M0 6l6-4v8zM7 2h2v8H7zM11 2h2v8h-2z" />
          </Play>
          <button aria-label="Play" className="mx-1 flex size-4 items-center justify-center border-2 border-black">
            <svg viewBox="0 0 8 10" className="h-2.5 w-2">
              <path d="M1 0l6 5-6 5z" />
            </svg>
          </button>
          <Play label="Next" w="w-[14px]" vb="0 0 14 12">
            <path d="M1 2h2v8H1zM5 2h2v8H5zM8 2l6 4-6 4z" />
          </Play>
          <div className="h-4 w-px bg-[#888]" />
          <Play label="Go to end">
            <g transform="matrix(-1 0 0 1 18 0)">{TO_START}</g>
          </Play>
        </div>
        <div className="flex h-[21px] items-center gap-1">
          <Play label="Key mode" w="w-4" vb="0 0 16 12">
            <path d="M2 2h1v8H2zM3 6l4-3v6zM13 2h1v8h-1zM13 6L9 3v6zM7.500 2h1v8h-1z" />
          </Play>
          <div className="h-4 w-px bg-[#888]" />
          <input
            aria-label="Current frame"
            defaultValue="0"
            className="h-5 w-[62px] border border-t-2 border-l-2 border-[#ececec] border-t-black border-l-black bg-[#e0e0e0] pl-0.5 text-[12px]"
          />
          <svg viewBox="0 0 10 16" className="-ml-0.5 h-4 w-2.5 border border-[#999]">
            <path d="M5 2l3 4H2zM5 14l3-4H2z" />
          </svg>
          <button aria-label="Time configuration">
            <Icon name="timeConfig" className="size-4" />
          </button>
        </div>
      </div>
      <div className="grid w-[100px] shrink-0 grid-cols-4 justify-items-center gap-y-0.5 pr-1 pl-0.5">
        {nav.map((n) => (
          <button key={n} aria-label={n} className="flex h-[21px] items-center">
            <Icon name={n} className="size-5" />
          </button>
        ))}
      </div>
    </footer>
  );
}

export default function App() {
  return (
    <div className="flex min-h-screen flex-col overflow-hidden bg-[#c5c5c5] font-['Liberation_Sans',Arial,sans-serif] text-black">
      <TitleBar />
      <MenuBar />
      <Toolbar />
      <div className="flex flex-1">
        <div className="flex min-w-0 flex-1 flex-col">
          <Viewport />
          <TimeSlider />
          <TrackBar />
        </div>
        <CommandPanel />
      </div>
      <StatusBar />
    </div>
  );
}
